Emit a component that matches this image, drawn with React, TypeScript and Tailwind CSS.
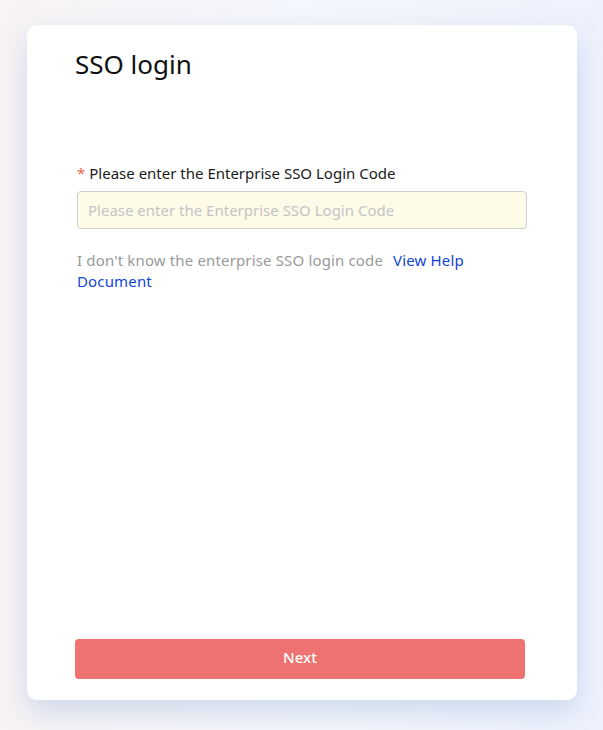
import React, { useState } from 'react';

export default function App() {
  const [code, setCode] = useState('');

  return (
    <div
      className="min-h-[730px] w-full bg-gradient-to-r from-[#f8f3f5] via-[#f4f7fc] to-[#edf2fd] pt-[25px] pl-[27px] pr-[26px] pb-[30px]"
      style={{ fontFamily: '"Noto Sans", "Open Sans", sans-serif' }}
    >
      <div className="flex h-[675px] w-[550px] flex-col rounded-[10px] bg-white px-[48px] pt-[21px] pb-[21px] shadow-[0_12px_28px_rgba(160,185,220,0.45)]">
        <h1 className="text-[26px] leading-[36px] text-[#111]">SSO login</h1>

        <div className="mt-[81px] pl-[2px]">
          <label className="block text-[15px] leading-[20px] text-[#1a1a1a]">
            <span className="mr-[4px] text-[#f0664e]">*</span>
            Please enter the Enterprise SSO Login Code
          </label>
          <input
            value={code}
            onChange={(e) => setCode(e.target.value)}
            placeholder="Please enter the Enterprise SSO Login Code"
            className="mt-[8px] block h-[38px] w-[450px] rounded-[4px] border border-[#cfcfcf] bg-[#fffbe9] px-[10px] text-[15px] text-[#333] outline-none placeholder:text-[#c4c4c4]"
          />
          <p className="mt-[21px] w-[410px] text-[15px] leading-[21px] tracking-[0.15px] text-[#9a9a9a]">
            <span>I don't know the enterprise SSO login code</span>
            <span className="ml-[10px] text-[#1145d6]">View Help</span>
            <br />
            <span className="text-[#1145d6]">Document</span>
          </p>
        </div>

        <div className="flex-1" />

        <button className="h-[40px] w-[450px] rounded-[4px] bg-[#ee7370] pb-[3px] text-[15px] font-medium text-white">
          Next
        </button>
      </div>
    </div>
  );
}
